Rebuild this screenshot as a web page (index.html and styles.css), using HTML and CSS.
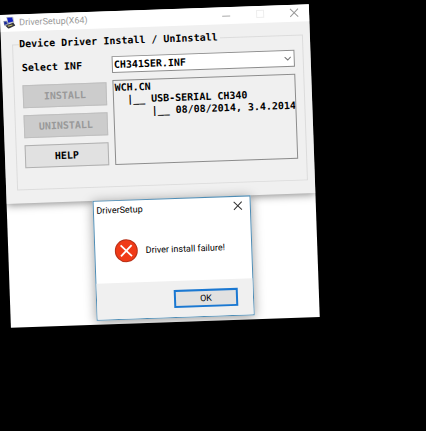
FILE: index.html
```html
<!DOCTYPE html>
<html lang="en">
<head>
    <meta charset="UTF-8">
    <meta name="viewport" content="width=device-width, initial-scale=1.0">
    <title>DriverSetup(X64)</title>
    <link rel="stylesheet" href="styles.css">
</head>
<body>
    <main class="desktop">
        <section class="window">
            <header class="title-bar">
                <svg class="app-icon" viewBox="0 0 12 12" aria-hidden="true">
                    <path d="M3 0h7l1 6-6 1z" fill="#b9bcc4"/>
                    <path d="M4 1h5l1 4-5 1z" fill="#1522c4"/>
                    <path d="M0 4h4l2 4-5 1z" fill="#8b93a8"/>
                    <path d="M1 5h2l1 2-3 1z" fill="#1a2a9c"/>
                    <path d="M2 9l8-3 2 3-7 3z" fill="#33343c"/>
                    <path d="M4 9l5-1v1l-4 1z" fill="#c9c46a"/>
                </svg>
                <h1>DriverSetup(X64)</h1>
                <div class="window-buttons">
                    <button type="button" aria-label="Minimize">
                        <svg viewBox="0 0 10 10"><path d="M1 6h8" stroke="#aaa"/></svg>
                    </button>
                    <button type="button" aria-label="Maximize" disabled>
                        <svg viewBox="0 0 10 10"><path d="M1.5 1.5h7v7h-7z" stroke="#eee"/></svg>
                    </button>
                    <button type="button" aria-label="Close">
                        <svg viewBox="0 0 10 10"><path d="M1 1l8 8M9 1l-8 8" stroke="#999"/></svg>
                    </button>
                </div>
            </header>

            <form class="window-body">
                <fieldset>
                    <legend>Device Driver Install / UnInstall</legend>
                    <div class="driver-grid">
                        <label for="infFile">Select INF</label>
                        <div class="combo">
                            <select id="infFile">
                                <option>CH341SER.INF</option>
                            </select>
                            <svg class="chevron" viewBox="0 0 8 6" aria-hidden="true"><path d="M1 1l3 3 3-3"/></svg>
                        </div>
                        <div class="actions">
                            <button type="button" disabled>INSTALL</button>
                            <button type="button" disabled>UNINSTALL</button>
                            <button type="button">HELP</button>
                        </div>
                        <pre class="driver-info">WCH.CN
  |__ USB-SERIAL CH340
      |__ 08/08/2014, 3.4.2014</pre>
                    </div>
                </fieldset>
            </form>
        </section>

        <section class="dialog" role="alertdialog" aria-labelledby="dialogTitle" aria-describedby="dialogText">
            <header class="dialog-title">
                <h2 id="dialogTitle">DriverSetup</h2>
                <button type="button" aria-label="Close">
                    <svg viewBox="0 0 10 10"><path d="M1 1l8 8M9 1l-8 8" stroke="#333"/></svg>
                </button>
            </header>
            <div class="dialog-message">
                <svg class="error-icon" viewBox="0 0 24 24" aria-hidden="true">
                    <circle cx="12" cy="12" r="11.5" fill="#b8321a"/>
                    <circle cx="12" cy="12" r="10.5" fill="#f03a17"/>
                    <path d="M6.5 6.5l11 11M17.5 6.5l-11 11" stroke="#fff" stroke-width="1.8"/>
                </svg>
                <p id="dialogText">Driver install failure!</p>
            </div>
            <footer class="dialog-footer">
                <button type="button">OK</button>
            </footer>
        </section>
    </main>
</body>
</html>
```

FILE: styles.css
```css
* {
    box-sizing: border-box;
}

body {
    margin: 0;
    padding-top: 15px;
    min-height: 100vh;
    background-color: #000;
    color: #000;
    font-family: Roboto, "Open Sans", sans-serif;
    font-size: 9px;
    overflow: hidden;
}

h1,
h2,
p {
    margin: 0;
    font-size: inherit;
    font-weight: normal;
}

svg {
    display: block;
    fill: none;
}

/* The desktop is tilted a little, with everything on it */
.desktop {
    position: relative;
    width: 72.5%;
    padding-bottom: 124px;
    background-color: #fff;
    overflow: hidden;
    transform: rotate(-2deg);
    transform-origin: 0 0;
}

.window {
    background-color: #f0f0f0;
    box-shadow: 0 1px 8px rgba(0, 0, 0, 0.5);
}

.title-bar {
    display: flex;
    align-items: center;
    height: 17px;
    padding: 0 10px 2px 3px;
    background-color: #fff;
    color: #999;
}

.app-icon {
    width: 12px;
    height: 12px;
    margin-right: 4px;
}

.window-buttons {
    display: flex;
    gap: 24px;
    margin-left: auto;
}

.window-buttons button,
.dialog-title button {
    width: 10px;
    height: 10px;
    padding: 0;
    border: none;
    background: none;
}

.window-body {
    padding: 7px 7px 13px 11px;
    font-family: "DejaVu Sans Mono", monospace;
    font-size: 10px;
    font-weight: bold;
    line-height: 12px;
}

fieldset {
    min-width: 0;
    margin: 0;
    padding: 9px 8px 21px;
    border: 1px solid #dcdcdc;
}

legend {
    margin-left: -2px;
    padding: 0 2px 0 0;
}

.driver-grid {
    display: grid;
    grid-template-columns: 84px 1fr;
    gap: 7px 6px;
}

.driver-grid label {
    align-self: center;
}

.combo {
    display: flex;
    align-items: center;
    height: 17px;
    border: 1px solid #8c8c8c;
    background-color: #fff;
}

.combo select {
    flex: 1;
    height: 100%;
    padding: 0 1px;
    border: none;
    background: none;
    color: inherit;
    font: inherit;
    appearance: none;
}

.chevron {
    width: 8px;
    height: 6px;
    margin-right: 2px;
    stroke: #777;
}

.actions {
    display: flex;
    flex-direction: column;
    gap: 7px;
    padding-top: 2px;
}

.actions button {
    height: 23px;
    padding: 0;
    border: 1px solid #b0b0b0;
    background-color: #e1e1e1;
    color: #000;
    font: inherit;
}

.actions button:disabled {
    border-color: #bfbfbf;
    background-color: #ccc;
    color: #999;
}

.driver-info {
    min-width: 0;
    margin: 0;
    padding: 1px;
    border: 1px solid #8c8c8c;
    font: inherit;
    overflow: hidden;
}

.dialog {
    position: absolute;
    top: 189px;
    left: 28%;
    width: 51%;
    border: 1px solid #4f8db5;
    background-color: #fff;
    box-shadow: 0 2px 12px rgba(0, 0, 0, 0.4);
}

.dialog-title {
    display: flex;
    align-items: center;
    justify-content: space-between;
    height: 18px;
    padding: 0 7px 0 2px;
}

.dialog-message {
    display: flex;
    align-items: center;
    gap: 7px;
    padding: 20px 19px;
}

.error-icon {
    width: 24px;
    height: 24px;
}

.dialog-footer {
    display: flex;
    justify-content: flex-end;
    padding: 9px 15px;
    background-color: #f0f0f0;
}

.dialog-footer button {
    width: 64px;
    height: 18px;
    padding: 0;
    border: 2px solid #1a78d2;
    background-color: #e1e1e1;
    color: #000;
    font: inherit;
}
```
